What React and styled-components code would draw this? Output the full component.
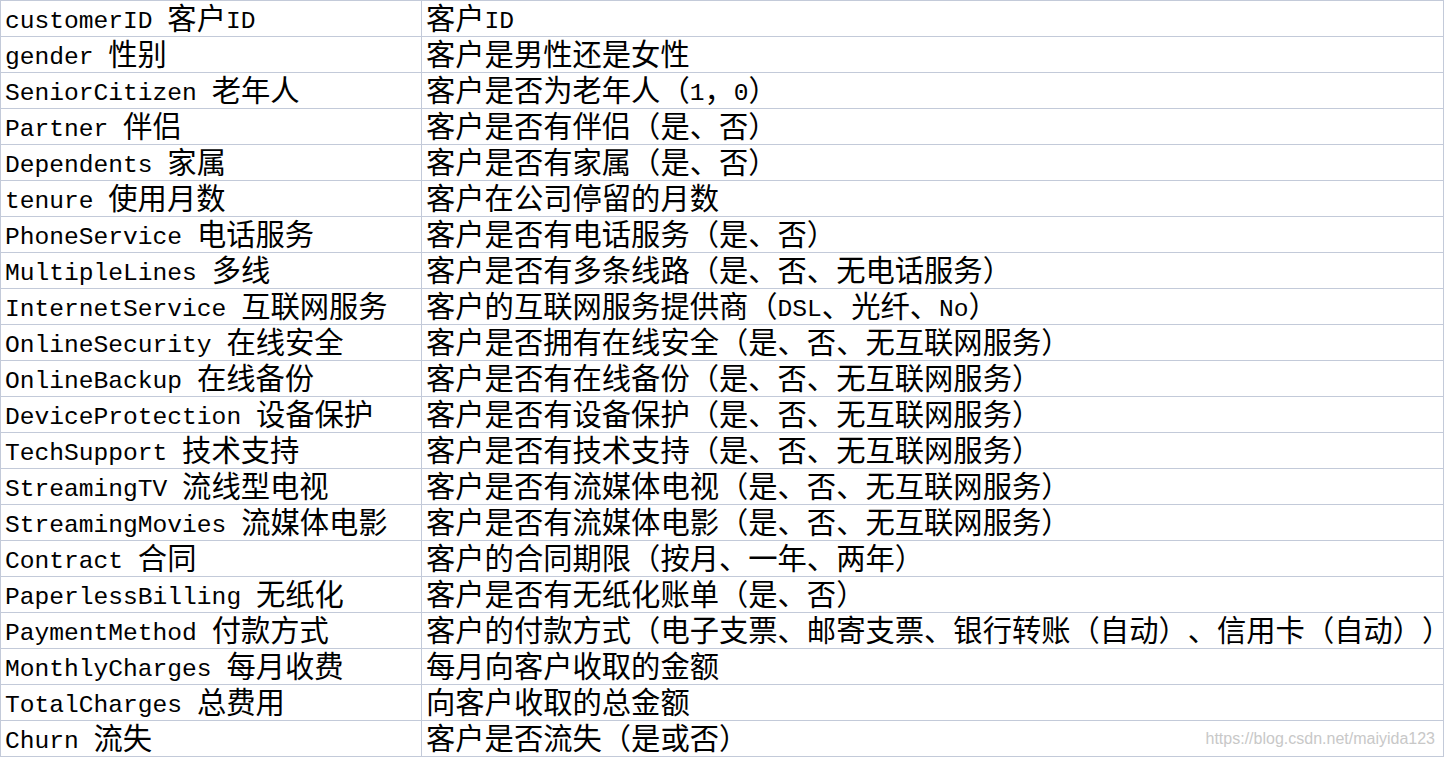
import React from "react";
import styled, { createGlobalStyle } from "styled-components";

const rows = [
  ["customerID 客户ID", "客户ID"],
  ["gender 性别", "客户是男性还是女性"],
  ["SeniorCitizen 老年人", "客户是否为老年人（1，0）"],
  ["Partner 伴侣", "客户是否有伴侣（是、否）"],
  ["Dependents 家属", "客户是否有家属（是、否）"],
  ["tenure 使用月数", "客户在公司停留的月数"],
  ["PhoneService 电话服务", "客户是否有电话服务（是、否）"],
  ["MultipleLines 多线", "客户是否有多条线路（是、否、无电话服务）"],
  ["InternetService 互联网服务", "客户的互联网服务提供商（DSL、光纤、No）"],
  ["OnlineSecurity 在线安全", "客户是否拥有在线安全（是、否、无互联网服务）"],
  ["OnlineBackup 在线备份", "客户是否有在线备份（是、否、无互联网服务）"],
  ["DeviceProtection 设备保护", "客户是否有设备保护（是、否、无互联网服务）"],
  ["TechSupport 技术支持", "客户是否有技术支持（是、否、无互联网服务）"],
  ["StreamingTV 流线型电视", "客户是否有流媒体电视（是、否、无互联网服务）"],
  ["StreamingMovies 流媒体电影", "客户是否有流媒体电影（是、否、无互联网服务）"],
  ["Contract 合同", "客户的合同期限（按月、一年、两年）"],
  ["PaperlessBilling 无纸化", "客户是否有无纸化账单（是、否）"],
  [
    "PaymentMethod 付款方式",
    "客户的付款方式（电子支票、邮寄支票、银行转账（自动）、信用卡（自动））",
  ],
  ["MonthlyCharges 每月收费", "每月向客户收取的金额"],
  ["TotalCharges 总费用", "向客户收取的总金额"],
  ["Churn 流失", "客户是否流失（是或否）"],
];

const CJK = /([\u3000-\u9fff\uff00-\uffef]+)/;

// split a string into latin / CJK runs so each gets its own width
function Mixed({ text }) {
  const parts = text.split(CJK).filter(Boolean);
  return parts.map((p, i) =>
    CJK.test(p) ? <Cjk key={i}>{p}</Cjk> : <span key={i}>{p}</span>
  );
}

export default function App() {
  return (
    <>
      <GlobalStyle />
      <Sheet>
        {rows.map(([name, desc]) => (
          <React.Fragment key={name}>
            <Cell>
              <Mixed text={name} />
            </Cell>
            <Cell>
              <Mixed text={desc} />
            </Cell>
          </React.Fragment>
        ))}
        <Watermark>https://blog.csdn.net/maiyida123</Watermark>
      </Sheet>
    </>
  );
}

const GlobalStyle = createGlobalStyle`
  body {
    margin: 0;
    background: #ffffff;
  }
`;

const Sheet = styled.div`
  position: relative;
  display: grid;
  grid-template-columns: 421px 1022px;
  grid-auto-rows: 36px;
  width: 1443px;
  border-top: 1px solid #c3cad9;
  border-left: 1px solid #c3cad9;
  font-family: "Liberation Mono", "Noto Sans CJK SC", monospace;
  font-size: 24.6px;
  color: #000000;
`;

const Cell = styled.div`
  box-sizing: border-box;
  padding-left: 4px;
  border-right: 1px solid #c3cad9;
  border-bottom: 1px solid #c3cad9;
  white-space: pre;
  overflow: hidden;
  line-height: 36px;
  text-spacing-trim: space-all;
`;

const Cjk = styled.span`
  font-family: "Noto Sans CJK SC", sans-serif;
  font-size: 29.3px;
  font-weight: 400;
  line-height: 30px;
  vertical-align: -1px;
  text-spacing-trim: space-all;
`;

const Watermark = styled.div`
  position: absolute;
  right: 9px;
  bottom: 9px;
  font-family: "Liberation Sans", Arial, sans-serif;
  font-size: 16px;
  color: #c8c8c8;
  pointer-events: none;
`;
